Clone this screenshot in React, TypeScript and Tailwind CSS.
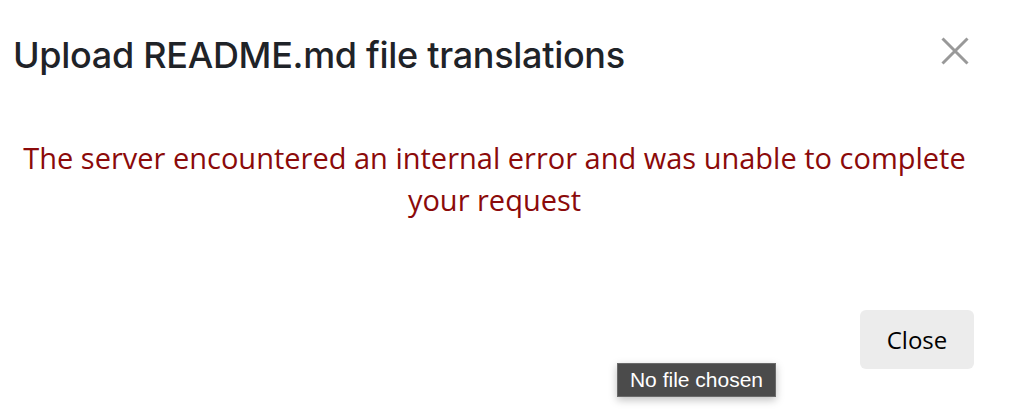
export default function App() {
  return (
    <div className="relative h-[413px] w-[1023px] overflow-hidden bg-white">
      <div className="flex items-start justify-between pl-[13px] pr-[54px] pt-[33px]">
        <h1 className="font-['Inter',sans-serif] text-[36px] font-medium leading-[44px] tracking-[-0.3px] text-[#1f2328]">
          Upload README.md file translations
        </h1>
        <button className="mt-[4px] text-[#999999]" aria-label="Close">
          <svg width="28" height="28" viewBox="0 0 28 28" fill="none" stroke="currentColor" strokeWidth="3">
            <path d="M1.5 1.5L26.5 26.5M26.5 1.5L1.5 26.5" />
          </svg>
        </button>
      </div>

      <div className="pl-[10px] pr-[44px] pt-[60px] text-center">
        <p className="font-['Open_Sans',sans-serif] text-[29px] leading-[42px] text-[#8b0a0a]">
          The server encountered an internal error and was unable to complete your request
        </p>
      </div>

      <div className="flex justify-end pr-[49px] pt-[89px]">
        <button className="h-[59px] w-[114px] rounded-[6px] bg-[#ececec] font-['Open_Sans',sans-serif] text-[24px] text-black">
          Close
        </button>
      </div>

      {/* native file input tooltip */}
      <div className="absolute left-[617px] top-[363px] flex h-[34px] w-[159px] items-center justify-center border border-[#6a6a6a] bg-[#4b4b4b] font-['Liberation_Sans',sans-serif] text-[21px] text-white shadow-[0_3px_8px_rgba(0,0,0,0.25)]">
        No file chosen
      </div>
    </div>
  )
}
